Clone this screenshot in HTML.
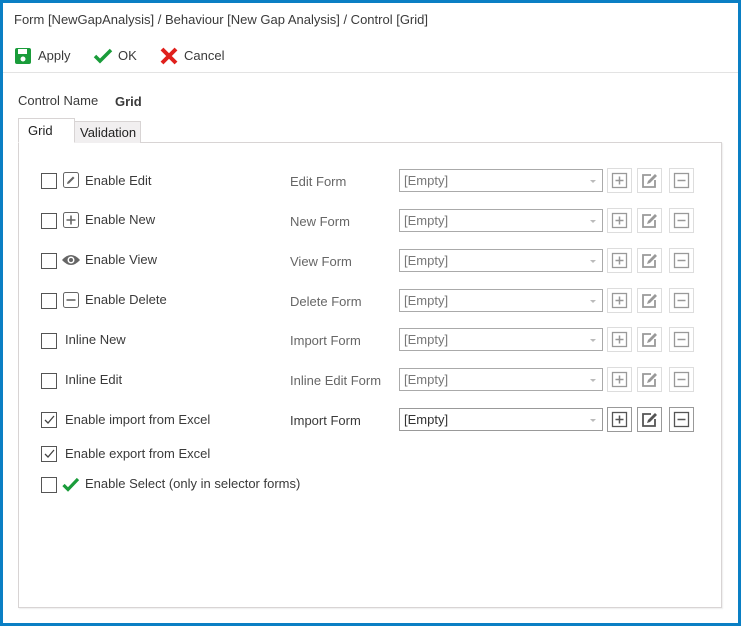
<!DOCTYPE html>
<html><head><style>
*{margin:0;padding:0;box-sizing:border-box}
body{width:741px;height:626px;background:#fff;font-family:"Liberation Sans",sans-serif;font-size:13px;color:#3a3a3a;position:relative;overflow:hidden}
.frame{position:absolute;left:0;top:0;width:741px;height:626px;border:3px solid #0a7fc4}
.a{position:absolute;white-space:nowrap}
.sep{position:absolute;left:3px;right:3px;top:72px;height:1px;background:#e3e3e3}
.panel{position:absolute;left:18px;top:142px;width:704px;height:466px;border:1px solid #d8d4d4;box-shadow:1px 1px 1px #eee}
.tab{position:absolute;border:1px solid #d8d4d4;border-bottom:none}
.cb{position:absolute;left:41px;width:16px;height:16px;border:1px solid #555;background:#fff}
.combo{position:absolute;left:399px;width:204px;height:23px;border:1px solid #aaa;background:#fff;color:#777;padding:3px 0 0 4px}
.combo:after{content:"";position:absolute;right:6px;top:10px;border:3px solid transparent;border-top:3px solid #bbb}
.btn{position:absolute;width:25px;height:25px;border:1px solid #ddd}
.btn svg{position:absolute;left:3px;top:3px}
.g{color:#666}
</style></head><body>
<div class="frame"></div>
<div class="a" style="left:14px;top:12px">Form [NewGapAnalysis] / Behaviour [New Gap Analysis] / Control [Grid]</div>
<svg class="a" style="left:14px;top:47px" width="18" height="18" viewBox="0 0 18 18"><rect x="1" y="1" width="16" height="16" rx="2" fill="#1a9c3a"/><rect x="4" y="2" width="9" height="5" fill="#fff"/><circle cx="9" cy="12" r="2.5" fill="#fff"/></svg>
<div class="a" style="left:38px;top:48px">Apply</div>
<svg class="a" style="left:93px;top:48px" width="20" height="16" viewBox="0 0 20 16"><path d="M2 8 L7 13 L18 2" stroke="#1a9c3a" stroke-width="3.5" fill="none"/></svg>
<div class="a" style="left:118px;top:48px">OK</div>
<svg class="a" style="left:160px;top:47px" width="18" height="18" viewBox="0 0 18 18"><path d="M2 2 L16 16 M16 2 L2 16" stroke="#e0201c" stroke-width="4"/></svg>
<div class="a" style="left:184px;top:48px">Cancel</div>
<div class="sep"></div>
<div class="a" style="left:18px;top:93px">Control Name</div>
<div class="a" style="left:115px;top:94px;font-weight:bold">Grid</div>
<div class="panel"></div>
<div class="tab" style="left:74px;top:121px;width:67px;height:22px;background:#f1eff0"><span class="a" style="left:5px;top:3px;color:#222">Validation</span></div>
<div class="tab" style="left:18px;top:118px;width:57px;height:25px;background:#fff;border-bottom:1px solid #fff"><span class="a" style="left:9px;top:4px;color:#222">Grid</span></div>

<div class="cb" style="top:173px"></div>
<svg class="a" style="left:63px;top:172px" width="16" height="16"><rect x="0.5" y="0.5" width="15" height="15" rx="2" fill="none" stroke="#666"/><path d="M4 12 L4.5 10 L10 4.5 L11.5 6 L6 11.5 Z" fill="#666"/></svg>
<div class="a" style="left:85px;top:173px">Enable Edit</div>
<div class="cb" style="top:213px"></div>
<svg class="a" style="left:63px;top:212px" width="16" height="16"><rect x="0.5" y="0.5" width="15" height="15" rx="2" fill="none" stroke="#666"/><path d="M8 3.5V12.5M3.5 8H12.5" stroke="#666" stroke-width="1.6"/></svg>
<div class="a" style="left:85px;top:212px">Enable New</div>
<div class="cb" style="top:253px"></div>
<svg class="a" style="left:61px;top:253px" width="20" height="14"><path d="M1 7 Q10 -3 19 7 Q10 17 1 7Z" fill="#666"/><circle cx="10" cy="7" r="3.5" fill="#fff"/><circle cx="10" cy="7" r="2" fill="#666"/></svg>
<div class="a" style="left:85px;top:252px">Enable View</div>
<div class="cb" style="top:293px"></div>
<svg class="a" style="left:63px;top:292px" width="16" height="16"><rect x="0.5" y="0.5" width="15" height="15" rx="2" fill="none" stroke="#666"/><path d="M3.5 8H12.5" stroke="#666" stroke-width="1.6"/></svg>
<div class="a" style="left:85px;top:292px">Enable Delete</div>
<div class="cb" style="top:333px"></div>
<div class="a" style="left:65px;top:332px">Inline New</div>
<div class="cb" style="top:373px"></div>
<div class="a" style="left:65px;top:372px">Inline Edit</div>
<div class="cb" style="top:412px"></div>
<svg class="a" style="left:44px;top:415px" width="11" height="10"><path d="M1 5 L4 8 L10 1" stroke="#444" stroke-width="1.3" fill="none"/></svg>
<div class="a" style="left:65px;top:412px">Enable import from Excel</div>
<div class="cb" style="top:446px"></div>
<svg class="a" style="left:44px;top:449px" width="11" height="10"><path d="M1 5 L4 8 L10 1" stroke="#444" stroke-width="1.3" fill="none"/></svg>
<div class="a" style="left:65px;top:446px">Enable export from Excel</div>
<div class="cb" style="top:477px"></div>
<svg class="a" style="left:62px;top:477px" width="18" height="15"><path d="M1.5 8 L6 12.5 L16 2" stroke="#1a9c3a" stroke-width="3.2" fill="none"/></svg>
<div class="a" style="left:85px;top:476px">Enable Select (only in selector forms)</div>

<div class="a g" style="left:290px;top:174px">Edit Form</div>
<div class="a g" style="left:290px;top:214px">New Form</div>
<div class="a g" style="left:290px;top:254px">View Form</div>
<div class="a g" style="left:290px;top:294px">Delete Form</div>
<div class="a g" style="left:290px;top:333px">Import Form</div>
<div class="a g" style="left:290px;top:373px">Inline Edit Form</div>
<div class="a" style="left:290px;top:413px">Import Form</div>

<div class="combo" style="top:169px">[Empty]</div>
<div class="combo" style="top:209px">[Empty]</div>
<div class="combo" style="top:249px">[Empty]</div>
<div class="combo" style="top:289px">[Empty]</div>
<div class="combo" style="top:328px">[Empty]</div>
<div class="combo" style="top:368px">[Empty]</div>
<div class="combo" style="top:408px;color:#333;border-color:#999">[Empty]</div>

<div id="btns"></div>
<script>
var tops=[168,208,248,288,327,367,407],h='';
tops.forEach(function(t,i){var c=i==6?'#555':'#999',b=i==6?'#999':'#ddd';
h+='<div class="btn" style="left:607px;top:'+t+'px;border-color:'+b+'"><svg width="17" height="17"><rect x="1.5" y="1.5" width="14" height="14" fill="none" stroke="'+c+'" stroke-width="1.3"/><path d="M8.5 4.5V12.5M4.5 8.5H12.5" stroke="'+c+'" stroke-width="1.5"/></svg></div>';
h+='<div class="btn" style="left:637px;top:'+t+'px;border-color:'+b+'"><svg width="19" height="17"><path d="M10 3H2V15H14V8" fill="none" stroke="'+c+'" stroke-width="1.8"/><path d="M6 12 L7 9 L14 2 L16 4 L9 11 Z" fill="'+c+'"/></svg></div>';
h+='<div class="btn" style="left:669px;top:'+t+'px;border-color:'+b+'"><svg width="17" height="17"><rect x="1.5" y="1.5" width="14" height="14" fill="none" stroke="'+c+'" stroke-width="1.3"/><path d="M4.5 8.5H12.5" stroke="'+c+'" stroke-width="1.5"/></svg></div>';});
document.getElementById('btns').innerHTML=h;
</script>
</body></html>
